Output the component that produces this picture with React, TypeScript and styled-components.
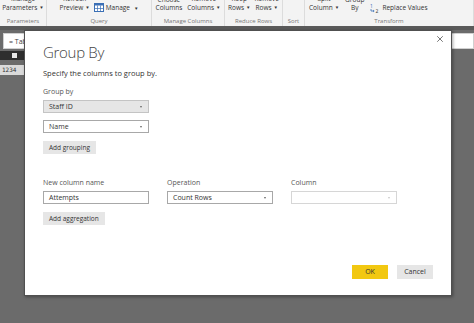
import styled, { createGlobalStyle } from 'styled-components';
import { X } from 'lucide-react';

const GlobalStyle = createGlobalStyle`
  html, body {
    margin: 0;
    padding: 0;
    width: 474px;
    height: 323px;
    overflow: hidden;
    background: #6b6b6b;
    font-family: "Open Sans", "Noto Sans", sans-serif;
  }
`;

const Page = styled.div`
  display: flex;
  flex-direction: column;
  width: 474px;
  height: 323px;
`;

/* ---------- ribbon ---------- */

const Ribbon = styled.div`
  display: flex;
  height: 26px;
  background: #f3f3f3;
  border-bottom: 4px solid #5a5a5a;
`;

const Group = styled.div<{ $w: number }>`
  display: flex;
  flex-direction: column;
  width: ${(p) => p.$w}px;
  flex-shrink: 0;
  border-right: 1px solid #dcdcdc;
  box-sizing: border-box;
`;

const Buttons = styled.div<{ $gap?: number; $start?: boolean }>`
  display: flex;
  align-items: flex-end;
  justify-content: ${(p) => (p.$start ? 'flex-start' : 'center')};
  gap: ${(p) => p.$gap ?? 6}px;
  height: 15px;
  padding: 0 0 3px ${(p) => (p.$start ? 4 : 0)}px;
  box-sizing: border-box;
`;

const BigButton = styled.div`
  font-size: 6.5px;
  line-height: 8px;
  color: #333;
  text-align: center;
  white-space: nowrap;
`;

const SmallButton = styled.div`
  display: flex;
  align-items: center;
  gap: 2px;
  font-size: 6.5px;
  line-height: 8px;
  color: #333;
  white-space: nowrap;
  align-self: flex-start;
  margin-top: 3px;
`;

const GroupLabel = styled.div`
  height: 11px;
  line-height: 12px;
  font-size: 6px;
  color: #777;
  text-align: center;
  white-space: nowrap;
`;

const Caret = styled.span`
  font-size: 4.5px;
  margin-left: 2px;
  vertical-align: 1px;
`;

/* ---------- workspace behind the dialog ---------- */

const Workspace = styled.div`
  position: relative;
  flex: 1;
  background: #6b6b6b;
`;

const FormulaBar = styled.div`
  display: flex;
  align-items: center;
  height: 16px;
  margin: 3px 0 0 3px;
  background: #ffffff;
  border: 1px solid #d0d0d0;
  box-sizing: border-box;
  font-size: 7px;
  color: #444;
  padding-left: 5px;
`;

const HeaderRow = styled.div`
  display: flex;
  align-items: center;
  width: 200px;
  height: 9px;
  margin-top: 2px;
  background: #2e2e2e;
`;

const HeaderDrop = styled.div`
  width: 5px;
  height: 5px;
  margin-left: 12px;
  background: #e8e8e8;
`;

const TypeRow = styled.div`
  width: 200px;
  height: 10px;
  margin-top: 5px;
  background: #dadada;
  font-family: "DejaVu Sans Mono", monospace;
  font-size: 6px;
  line-height: 10px;
  color: #333;
  padding-left: 2px;
`;

/* ---------- dialog ---------- */

const Dialog = styled.div`
  position: absolute;
  left: 24px;
  top: 0;
  width: 428px;
  height: 266px;
  box-sizing: border-box;
  background: #ffffff;
  border: 1px solid #505050;
  box-shadow: 1px 1px 3px rgba(0, 0, 0, 0.35);
  padding: 11px 18px 16px 18px;
  display: flex;
  flex-direction: column;
  color: #333;
`;

const Close = styled.div`
  position: absolute;
  right: 6px;
  top: 3px;
  color: #333;
  display: flex;
`;

const Title = styled.div`
  font-size: 15px;
  font-weight: 300;
  line-height: 20px;
  color: #444;
  letter-spacing: -0.3px;
`;

const Description = styled.div`
  margin-top: 6px;
  font-size: 7.5px;
  line-height: 10px;
  color: #333;
`;

const Label = styled.div<{ $mt: number }>`
  margin-top: ${(p) => p.$mt}px;
  font-size: 7px;
  line-height: 10px;
  color: #555;
`;

const Field = styled.div<{ $mt?: number; $filled?: boolean; $disabled?: boolean }>`
  position: relative;
  display: flex;
  align-items: center;
  width: 106px;
  height: 13px;
  margin-top: ${(p) => p.$mt ?? 0}px;
  box-sizing: border-box;
  padding-left: 5px;
  background: ${(p) => (p.$filled ? '#e6e6e6' : '#ffffff')};
  border: 1px solid ${(p) => (p.$disabled ? '#d6d6d6' : p.$filled ? '#c4c4c4' : '#a8a8a8')};
  font-size: 7px;
  color: #333;
`;

const Arrow = styled.span<{ $disabled?: boolean }>`
  position: absolute;
  right: 6px;
  top: 5px;
  width: 0;
  height: 0;
  border-left: 1.5px solid transparent;
  border-right: 1.5px solid transparent;
  border-top: 2px solid ${(p) => (p.$disabled ? '#c8c8c8' : '#666')};
`;

const Button = styled.div<{ $mt: number }>`
  align-self: flex-start;
  margin-top: ${(p) => p.$mt}px;
  height: 13px;
  padding: 0 6px;
  background: #e6e6e6;
  font-size: 6.5px;
  line-height: 13px;
  color: #333;
`;

const AggGrid = styled.div<{ $mt: number }>`
  display: grid;
  grid-template-columns: 106px 106px 106px;
  column-gap: 18px;
  margin-top: ${(p) => p.$mt}px;
`;

const Column = styled.div`
  display: flex;
  flex-direction: column;
`;

const Footer = styled.div`
  margin-top: auto;
  display: flex;
  justify-content: flex-end;
  gap: 9px;
`;

const FooterButton = styled.div<{ $primary?: boolean }>`
  width: 36px;
  height: 14px;
  line-height: 14px;
  text-align: center;
  font-size: 7px;
  color: #333;
  background: ${(p) => (p.$primary ? '#f2c811' : '#e6e6e6')};
`;

const TableIcon = () => (
  <svg width="10" height="9" viewBox="0 0 10 9">
    <rect x="0.5" y="0.5" width="9" height="8" fill="#fff" stroke="#3a6fb5" />
    <rect x="0.5" y="0.5" width="9" height="2" fill="#3a6fb5" />
    <line x1="3.5" y1="2.5" x2="3.5" y2="8.5" stroke="#3a6fb5" strokeWidth="0.7" />
    <line x1="6.5" y1="2.5" x2="6.5" y2="8.5" stroke="#3a6fb5" strokeWidth="0.7" />
    <line x1="0.5" y1="5.5" x2="9.5" y2="5.5" stroke="#3a6fb5" strokeWidth="0.7" />
  </svg>
);

const ReplaceIcon = () => (
  <svg width="10" height="10" viewBox="0 0 10 10">
    <text x="0" y="5" fontSize="5" fill="#3a6fb5" fontFamily="Open Sans">1</text>
    <path d="M1 6 L1 8 L4 8" stroke="#3a6fb5" strokeWidth="0.8" fill="none" />
    <path d="M3 7 L4.2 8 L3 9" stroke="#3a6fb5" strokeWidth="0.7" fill="none" />
    <text x="5.5" y="10" fontSize="5" fill="#333" fontFamily="Open Sans">2</text>
  </svg>
);

const App = () => {
  return (
    <Page>
      <GlobalStyle />
      <Ribbon>
        <Group $w={47}>
          <Buttons>
            <BigButton>Manage<br />Parameters<Caret>▼</Caret></BigButton>
          </Buttons>
          <GroupLabel>Parameters</GroupLabel>
        </Group>
        <Group $w={105}>
          <Buttons $gap={4}>
            <BigButton>Refresh<br />Preview<Caret>▼</Caret></BigButton>
            <SmallButton><TableIcon />Manage<Caret>▼</Caret></SmallButton>
          </Buttons>
          <GroupLabel>Query</GroupLabel>
        </Group>
        <Group $w={73}>
          <Buttons $gap={5}>
            <BigButton>Choose<br />Columns</BigButton>
            <BigButton>Remove<br />Columns<Caret>▼</Caret></BigButton>
          </Buttons>
          <GroupLabel>Manage Columns</GroupLabel>
        </Group>
        <Group $w={58}>
          <Buttons $gap={4}>
            <BigButton>Keep<br />Rows<Caret>▼</Caret></BigButton>
            <BigButton>Remove<br />Rows<Caret>▼</Caret></BigButton>
          </Buttons>
          <GroupLabel>Reduce Rows</GroupLabel>
        </Group>
        <Group $w={22}>
          <Buttons />
          <GroupLabel>Sort</GroupLabel>
        </Group>
        <Group $w={169}>
          <Buttons $gap={6} $start>
            <BigButton>Split<br />Column<Caret>▼</Caret></BigButton>
            <BigButton>Group<br />By</BigButton>
            <SmallButton><ReplaceIcon />Replace Values</SmallButton>
          </Buttons>
          <GroupLabel>Transform</GroupLabel>
        </Group>
      </Ribbon>

      <Workspace>
        <FormulaBar>= Table</FormulaBar>
        <HeaderRow>
          <HeaderDrop />
        </HeaderRow>
        <TypeRow>1234</TypeRow>

        <Dialog>
          <Close><X size={10} strokeWidth={1.6} /></Close>
          <Title>Group By</Title>
          <Description>Specify the columns to group by.</Description>
          <Label $mt={9}>Group by</Label>
          <Field $mt={3} $filled>Staff ID<Arrow /></Field>
          <Field $mt={7}>Name<Arrow /></Field>
          <Button $mt={8}>Add grouping</Button>

          <AggGrid $mt={24}>
            <Column>
              <Label $mt={0}>New column name</Label>
              <Field $mt={3}>Attempts</Field>
            </Column>
            <Column>
              <Label $mt={0}>Operation</Label>
              <Field $mt={3}>Count Rows<Arrow /></Field>
            </Column>
            <Column>
              <Label $mt={0}>Column</Label>
              <Field $mt={3} $disabled><Arrow $disabled /></Field>
            </Column>
          </AggGrid>
          <Button $mt={8}>Add aggregation</Button>

          <Footer>
            <FooterButton $primary>OK</FooterButton>
            <FooterButton>Cancel</FooterButton>
          </Footer>
        </Dialog>
      </Workspace>
    </Page>
  );
};

export default App;
